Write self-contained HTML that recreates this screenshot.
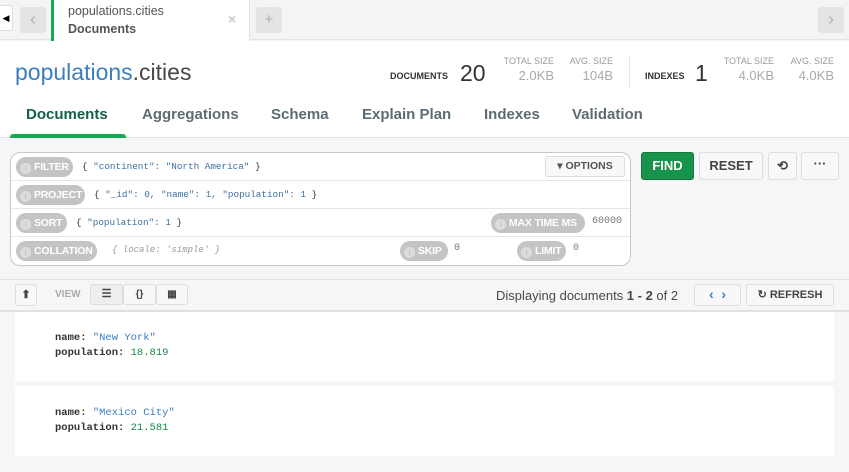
<!DOCTYPE html>
<html><head><style>
*{box-sizing:border-box;margin:0;padding:0}
body{width:849px;height:472px;overflow:hidden;background:#f5f6f7;font-family:"Liberation Sans",sans-serif;position:relative}
.abs{position:absolute}
.mono{font-family:"Liberation Mono",monospace}
.pill{position:absolute;height:20px;border-radius:10px;background:#c4c4c4;color:#fff;font-weight:bold;font-size:10.5px;line-height:20px;padding:0 0 0 4px;white-space:nowrap;letter-spacing:-0.2px;overflow:hidden}
.pill i{display:inline-block;width:11px;height:11px;border-radius:50%;background:#dcdcdc;color:#c4c4c4;font-style:normal;font-size:8px;line-height:11px;text-align:center;margin-right:3px;vertical-align:-1px}
.q{position:absolute;font-size:9.3px;color:#3d6fa1}
.btn{position:absolute;background:#f8f8f8;border:1px solid #ddd;border-radius:3px;text-align:center;font-weight:bold;color:#444}
</style></head><body>
<div class="abs" style="left:0;top:0;width:849px;height:40px;background:#f3f4f5;border-bottom:1px solid #e2e3e5"></div>
<div class="abs" style="left:0;top:5px;width:13px;height:26px;background:#fff;border:1px solid #ddd;border-left:none;border-radius:0 3px 3px 0;font-size:9px;line-height:24px;text-align:center">◀</div>
<div class="abs" style="left:20px;top:7px;width:26px;height:26px;background:#e3e4e6;border-radius:3px;color:#b3b3b3;font-size:18px;line-height:24px;text-align:center">‹</div>
<div class="abs" style="left:51px;top:0;width:199px;height:41px;background:#fff;border-left:3px solid #13aa52;border-right:1px solid #e2e3e5"></div>
<div class="abs" style="left:68px;top:4px;font-size:12.5px;color:#555">populations.cities</div>
<div class="abs" style="left:68px;top:22px;font-size:12.5px;color:#555;font-weight:bold">Documents</div>
<div class="abs" style="left:228px;top:11px;font-size:14px;color:#ccc;font-weight:bold">×</div>
<div class="abs" style="left:256px;top:7px;width:26px;height:26px;background:#e3e4e6;border-radius:3px;color:#aaa;font-size:15px;line-height:26px;text-align:center">+</div>
<div class="abs" style="left:818px;top:7px;width:26px;height:26px;background:#e3e4e6;border-radius:3px;color:#b3b3b3;font-size:18px;line-height:24px;text-align:center">›</div>
<div class="abs" style="left:0;top:41px;width:849px;height:97px;background:#fff;border-bottom:1px solid #e4e4e4"></div>
<div class="abs" style="left:15px;top:59px;font-size:23px;color:#494747"><span style="color:#3d7ebf">populations</span>.cities</div>
<div class="abs" style="left:390px;top:71px;font-size:9px;font-weight:bold;color:#333">DOCUMENTS</div>
<div class="abs" style="left:460px;top:60px;font-size:23px;color:#333">20</div>
<div class="abs" style="left:499px;top:56px;font-size:9px;color:#999;text-align:right;width:55px">TOTAL SIZE</div>
<div class="abs" style="left:499px;top:68px;font-size:13px;color:#aaa;text-align:right;width:55px">2.0KB</div>
<div class="abs" style="left:563px;top:56px;font-size:9px;color:#999;text-align:right;width:50px">AVG. SIZE</div>
<div class="abs" style="left:563px;top:68px;font-size:13px;color:#aaa;text-align:right;width:50px">104B</div>
<div class="abs" style="left:629px;top:56px;width:1px;height:32px;background:#e8e8e8"></div>
<div class="abs" style="left:645px;top:71px;font-size:9px;font-weight:bold;color:#333">INDEXES</div>
<div class="abs" style="left:695px;top:60px;font-size:23px;color:#333">1</div>
<div class="abs" style="left:719px;top:56px;font-size:9px;color:#999;text-align:right;width:55px">TOTAL SIZE</div>
<div class="abs" style="left:719px;top:68px;font-size:13px;color:#aaa;text-align:right;width:55px">4.0KB</div>
<div class="abs" style="left:784px;top:56px;font-size:9px;color:#999;text-align:right;width:50px">AVG. SIZE</div>
<div class="abs" style="left:784px;top:68px;font-size:13px;color:#aaa;text-align:right;width:50px">4.0KB</div>
<div class="abs" style="top:106px;left:26px;font-size:15px;font-weight:bold;color:#136149">Documents</div>
<div class="abs" style="top:106px;left:142px;font-size:15px;font-weight:bold;color:#5d6c74">Aggregations</div>
<div class="abs" style="top:106px;left:271px;font-size:15px;font-weight:bold;color:#5d6c74">Schema</div>
<div class="abs" style="top:106px;left:362px;font-size:15px;font-weight:bold;color:#5d6c74">Explain Plan</div>
<div class="abs" style="top:106px;left:484px;font-size:15px;font-weight:bold;color:#5d6c74">Indexes</div>
<div class="abs" style="top:106px;left:572px;font-size:15px;font-weight:bold;color:#5d6c74">Validation</div>
<div class="abs" style="left:10px;top:134px;width:116px;height:4px;background:#13aa52;border-radius:3px 3px 0 0"></div>
<div class="abs" style="left:10px;top:152px;width:621px;height:114px;background:#fff;border:1px solid #c8c8c8;border-radius:10px"></div>
<div class="abs" style="left:11px;top:180px;width:619px;height:1px;background:#e6e6e6"></div>
<div class="abs" style="left:11px;top:208px;width:619px;height:1px;background:#e6e6e6"></div>
<div class="abs" style="left:11px;top:236px;width:619px;height:1px;background:#e6e6e6"></div>
<div class="pill" style="left:16px;top:157px;width:57px"><i>i</i>FILTER</div>
<div class="q mono" style="left:82px;top:161px"><span style="color:#333">{</span> "continent": "North America" <span style="color:#333">}</span></div>
<div class="btn" style="left:545px;top:156px;width:80px;height:21px;font-size:10.5px;line-height:19px;color:#555">▾ OPTIONS</div>
<div class="pill" style="left:16px;top:185px;width:69px"><i>i</i>PROJECT</div>
<div class="q mono" style="left:94px;top:189px"><span style="color:#333">{</span> "_id": 0, "name": 1, "population": 1 <span style="color:#333">}</span></div>
<div class="pill" style="left:16px;top:213px;width:51px"><i>i</i>SORT</div>
<div class="q mono" style="left:76px;top:217px"><span style="color:#333">{</span> "population": 1 <span style="color:#333">}</span></div>
<div class="pill" style="left:491px;top:213px;width:94px"><i>i</i>MAX TIME MS</div>
<div class="abs mono" style="left:592px;top:216px;font-size:10px;color:#777;width:34px;overflow:hidden">60000</div>
<div class="pill" style="left:16px;top:241px;width:81px"><i>i</i>COLLATION</div>
<div class="abs mono" style="left:112px;top:245px;font-size:9px;font-style:italic;color:#999">{ locale: 'simple' }</div>
<div class="pill" style="left:400px;top:241px;width:48px"><i>i</i>SKIP</div>
<div class="abs mono" style="left:454px;top:243px;font-size:10px;color:#777">0</div>
<div class="pill" style="left:517px;top:241px;width:49px"><i>i</i>LIMIT</div>
<div class="abs mono" style="left:573px;top:243px;font-size:10px;color:#777">0</div>
<div class="abs" style="left:641px;top:152px;width:53px;height:28px;background:#18934b;border:1px solid #107a3b;border-radius:3px;color:#fff;font-weight:bold;font-size:13px;line-height:26px;text-align:center">FIND</div>
<div class="btn" style="left:699px;top:152px;width:64px;height:28px;font-size:13px;line-height:26px">RESET</div>
<div class="btn" style="left:768px;top:152px;width:29px;height:28px;font-size:13px;line-height:26px">⟲</div>
<div class="btn" style="left:801px;top:152px;width:38px;height:28px;font-size:13px;line-height:22px">···</div>
<div class="abs" style="left:0;top:279px;width:849px;height:1px;background:#e4e4e4"></div>
<div class="abs" style="left:0;top:310px;width:849px;height:2px;background:#e0e0e0"></div>
<div class="btn" style="left:15px;top:284px;width:22px;height:22px;font-size:11px;line-height:20px">⬆</div>
<div class="abs" style="left:55px;top:289px;font-size:10px;font-weight:bold;color:#aaa">VIEW</div>
<div class="btn" style="left:90px;top:284px;width:33px;height:21px;background:#eee;font-size:11px;line-height:19px">☰</div>
<div class="btn" style="left:123px;top:284px;width:33px;height:21px;font-size:10px;line-height:19px">{}</div>
<div class="btn" style="left:156px;top:284px;width:32px;height:21px;font-size:10px;line-height:19px">▦</div>
<div class="abs" style="left:496px;top:288px;font-size:13px;color:#494747">Displaying documents <b>1 - 2</b> of 2</div>
<div class="btn" style="left:694px;top:284px;width:47px;height:22px;font-size:14px;line-height:19px;color:#3d7ebf">‹ &nbsp;›</div>
<div class="btn" style="left:746px;top:284px;width:88px;height:22px;font-size:11px;line-height:20px">↻ REFRESH</div>
<div class="abs" style="left:15px;top:312px;width:819px;height:69px;background:#fff"></div>
<div class="abs" style="left:15px;top:386px;width:819px;height:70px;background:#fff"></div>
<div class="abs mono" style="left:55px;top:331px;font-size:10.5px;line-height:15px;color:#333;font-weight:bold">name:<span style="font-weight:normal;color:#3d7ebf"> "New York"</span><br>population:<span style="font-weight:normal;color:#138a4a"> 18.819</span></div>
<div class="abs mono" style="left:55px;top:406px;font-size:10.5px;line-height:15px;color:#333;font-weight:bold">name:<span style="font-weight:normal;color:#3d7ebf"> "Mexico City"</span><br>population:<span style="font-weight:normal;color:#138a4a"> 21.581</span></div>
</body></html>
